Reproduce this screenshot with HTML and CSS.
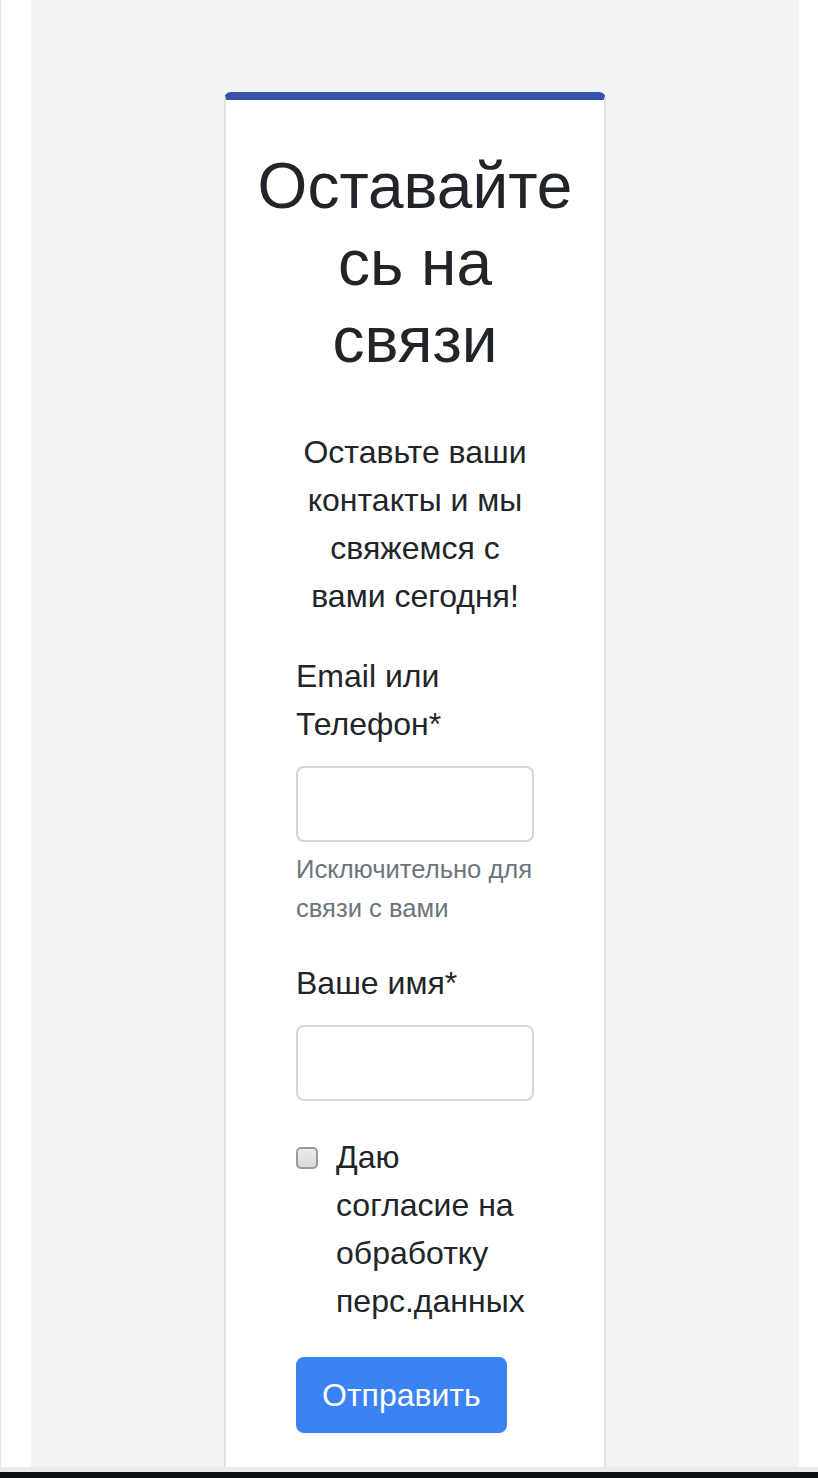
FILE: index.html
```html
<!DOCTYPE html>
<html lang="ru">
<head>
<meta charset="utf-8">
<title>Оставайтесь на связи</title>
<link rel="stylesheet" href="styles.css">
</head>
<body>
<div class="frame">
  <div class="gutter"></div>
  <main class="panel">
    <section class="card">
      <h2 class="title">Оставайтесь на связи</h2>
      <div class="inner">
        <p class="lead">Оставьте ваши контакты и мы свяжемся с вами сегодня!</p>
        <form class="form">
          <div class="group">
            <label class="label" for="contact">Email или Телефон*</label>
            <input class="control" id="contact" type="text">
            <small class="hint">Исключительно для связи с вами</small>
          </div>
          <div class="group">
            <label class="label" for="name">Ваше имя*</label>
            <input class="control" id="name" type="text">
          </div>
          <div class="check">
            <input class="box" id="agree" type="checkbox">
            <label class="check-label" for="agree">Даю согласие на обработку перс.данных</label>
          </div>
          <button class="btn" type="button">Отправить</button>
        </form>
      </div>
    </section>
  </main>
  <div class="side"></div>
</div>
<div class="sep"></div>
<div class="bar"></div>
</body>
</html>
```
FILE: styles.css
```css
* { box-sizing: border-box; }
html, body { margin: 0; padding: 0; }
body {
  width: 818px;
  height: 1478px;
  overflow: hidden;
  background: #ffffff;
  font-family: "Liberation Sans", Arial, sans-serif;
  color: #212529;
}
.frame {
  display: flex;
  height: 1467px;
  overflow: hidden;
  border-left: 1px solid #e6e6e6;
}
.gutter { width: 30px; flex: none; background: #ffffff; }
.side { flex: 1; background: #ffffff; }
.panel {
  width: 768px;
  flex: none;
  background: #f3f3f3;
  padding-top: 92px;
  display: flex;
  justify-content: center;
  align-items: flex-start;
}
.card {
  width: 382px;
  min-height: 1400px;
  background: #ffffff;
  border: 2px solid #e1e1e1;
  border-top: 8px solid #3554a9;
  border-radius: 7px 7px 0 0;
  padding: 48px 28px 0;
}
.title {
  margin: 0 0 50px;
  font-size: 64px;
  line-height: 1.2;
  font-weight: 400;
  text-align: center;
  overflow-wrap: break-word;
}
.inner {
  width: 238px;
  margin: 0 auto;
}
.lead {
  margin: 0 0 32px;
  font-size: 32px;
  line-height: 48px;
  text-align: center;
}
.group { margin-bottom: 32px; }
.label {
  display: block;
  font-size: 32px;
  line-height: 48px;
  margin-bottom: 18px;
}
.control {
  display: block;
  width: 238px;
  height: 76px;
  border: 2px solid #d3d7db;
  border-radius: 8px;
  background: #ffffff;
  font-size: 32px;
  padding: 12px 24px;
}
.hint {
  display: block;
  margin-top: 8px;
  font-size: 25.6px;
  line-height: 38.4px;
  color: #6c757d;
}
.check {
  display: flex;
  align-items: flex-start;
  margin-bottom: 32px;
}
.box {
  appearance: none;
  -webkit-appearance: none;
  flex: none;
  width: 22px;
  height: 22px;
  margin: 14px 18px 0 0;
  border: 2px solid #9a9a9a;
  border-radius: 5px;
  background: linear-gradient(#ececec, #d9d9d9);
}
.check-label {
  font-size: 32px;
  line-height: 48px;
}
.btn {
  display: inline-block;
  height: 76px;
  padding: 12px 24px;
  border: 2px solid #3b82f2;
  border-radius: 8px;
  background: #3b82f2;
  color: #ffffff;
  font-family: "Liberation Sans", Arial, sans-serif;
  font-size: 32px;
  line-height: 48px;
}
.sep {
  height: 5px;
  background: #ebebeb;
}
.bar {
  height: 6px;
  background: #0d1014;
}
```
